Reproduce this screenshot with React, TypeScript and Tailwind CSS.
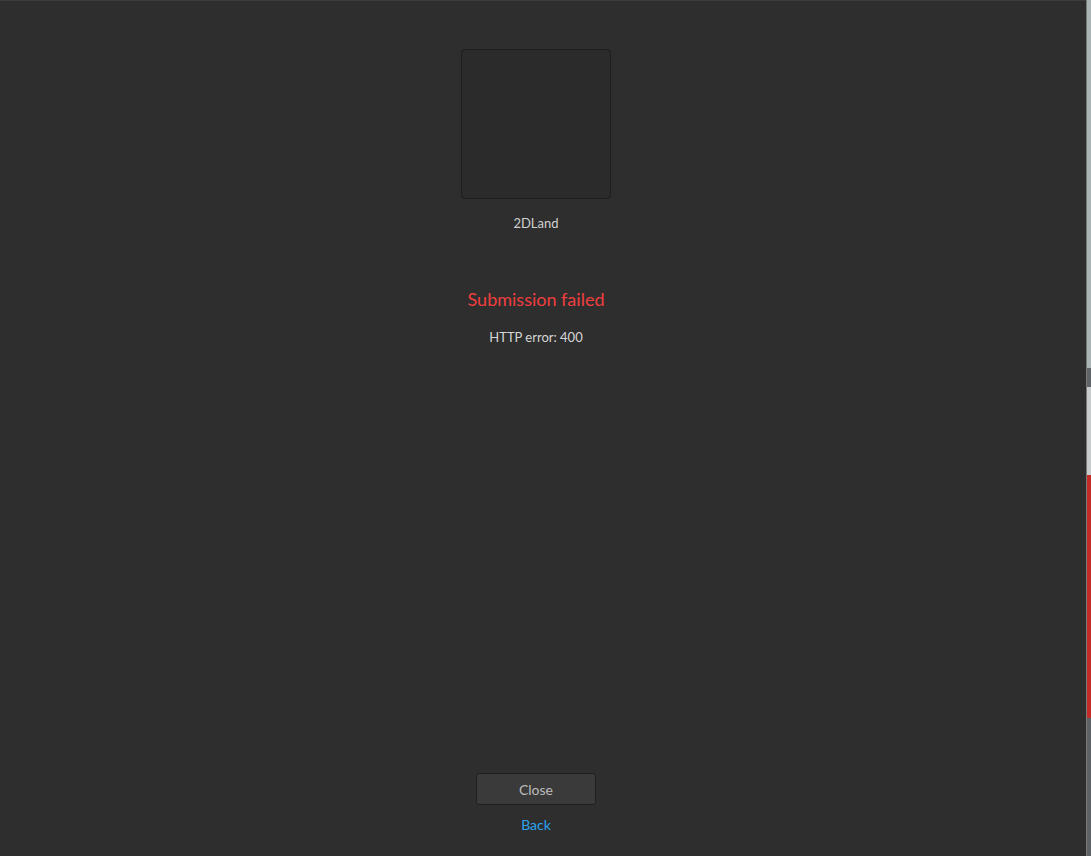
import React from 'react';

const font = { fontFamily: 'Lato, "Open Sans", sans-serif' };

// Strip of the window sitting behind the dialog
const BackdropStrip: React.FC = () => (
  <div className="flex w-[4px] flex-col">
    <div className="h-[368px] bg-[#aab4b4]" />
    <div className="h-[19px] bg-[#5e6468]" />
    <div className="h-[88px] bg-[#c8cccc]" />
    <div className="h-[243px] bg-[#c42a26]" />
    <div className="flex-1 bg-[#5c6266]" />
  </div>
);

export default function App() {
  return (
    <div className="flex h-[856px] w-[1091px] overflow-hidden bg-[#2e2e2e]" style={font}>
      <div className="flex w-[1086px] flex-col items-center border-t border-[#3c3c3c] bg-[#2e2e2e] pr-[14px]">
        <div className="mt-[48px] h-[150px] w-[150px] rounded-[3px] border border-[#1e1e1e] bg-[#2b2b2b]" />
        <div className="mt-[15px] text-[13px] leading-[18px] text-[#d0d0d0]">2DLand</div>

        <div className="mt-[55px] text-[18px] leading-[24px] text-[#ee3f3f]">Submission failed</div>
        <div className="mt-[17px] text-[13px] leading-[18px] text-[#d6d6d6]">HTTP error: 400</div>

        <div className="flex-1" />

        <button className="h-[32px] w-[120px] rounded-[3px] border border-[#1f1f1f] bg-[#3a3a3a] text-[14px] text-[#bdbdbd]">
          Close
        </button>
        <a className="mt-[10px] mb-[21px] cursor-pointer text-[14px] leading-[20px] text-[#2aa4ee]">Back</a>
      </div>
      <div className="w-[1px] bg-[#7a7a7a]" />
      <BackdropStrip />
    </div>
  );
}
